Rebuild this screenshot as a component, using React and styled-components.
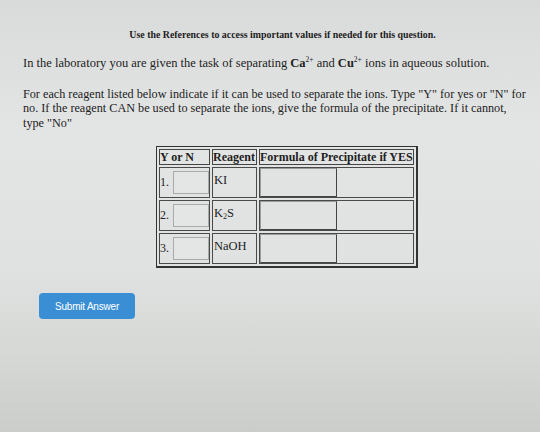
import React from "react";
import styled, { createGlobalStyle } from "styled-components";

const GlobalStyle = createGlobalStyle`
  html, body {
    margin: 0;
    padding: 0;
  }
  body {
    width: 540px;
    height: 432px;
    overflow: hidden;
    background: linear-gradient(180deg, #d9dbda 0%, #e3e5e4 30%, #e0e2e1 62%, #d5d7d5 84%, #cbcdcb 100%);
  }
`;

const Page = styled.div`
  box-sizing: border-box;
  width: 540px;
  height: 432px;
  padding: 29px 8px 0 23px;
  font-family: "Liberation Serif", "Times New Roman", serif;
  color: #222;
`;

const Notice = styled.p`
  margin: 0 0 15px;
  padding-left: 10px;
  text-align: center;
  font-size: 9.9px;
  font-weight: bold;
  line-height: 12px;
  color: #1c1c1c;
`;

const Para = styled.p`
  margin: 0 0 ${(p) => p.$gap || 0}px;
  max-width: ${(p) => p.$max || 520}px;
  font-size: ${(p) => p.$size || 12}px;
  line-height: 14.5px;
`;

const Ion = styled.b`
  font-weight: bold;
`;

const Sup = styled.sup`
  font-size: 7.5px;
  line-height: 0;
  vertical-align: 5px;
  font-weight: normal;
`;

const Sub = styled.sub`
  font-size: 8px;
  line-height: 0;
  vertical-align: -2px;
`;

const Table = styled.table`
  margin: 16px 0 0 133px;
  border-collapse: separate;
  border-spacing: 2px;
  border: 1px solid #333;
  border-right-width: 2px;
  border-bottom-width: 2px;
  font-size: 12px;
`;

const Th = styled.th`
  border: 1px solid #444;
  padding: 0;
  height: 14px;
  font-weight: bold;
  font-size: 12px;
  text-align: left;
  white-space: nowrap;
  line-height: 14px;
  width: ${(p) => p.$w}px;
`;

const Td = styled.td`
  border: 1px solid #4a4a4a;
  padding: 0;
  height: 29px;
  vertical-align: middle;
`;

const Cell = styled.div`
  display: flex;
  align-items: center;
  height: 100%;
  padding-bottom: ${(p) => (p.$lift ? 4 : 0)}px;
  box-sizing: border-box;
`;

const Num = styled.span`
  width: 13px;
  font-size: 12px;
`;

const SmallBox = styled.div`
  box-sizing: border-box;
  width: 36px;
  height: 23px;
  border: 1px solid #a9abaa;
  background: #e4e6e5;
`;

const Formula = styled.div`
  box-sizing: border-box;
  width: 77px;
  height: 29px;
  border: 1px solid #9a9c9b;
  border-right-color: #444;
  border-bottom-color: #444;
  background: #e1e3e2;
`;

const Reagent = styled.span`
  padding-left: 1px;
  font-size: 12.5px;
`;

const Submit = styled.button`
  margin: 25px 0 0 16px;
  width: 96px;
  height: 26px;
  border: none;
  border-radius: 4px;
  background: #3a8fd4;
  color: #fff;
  font-family: "Liberation Sans", Arial, sans-serif;
  font-size: 10px;
  letter-spacing: -0.2px;
  padding: 0;
`;

const rows = [
  { n: "1.", reagent: "KI" },
  { n: "2.", reagent: <>K<Sub>2</Sub>S</> },
  { n: "3.", reagent: "NaOH" },
];

export default function App() {
  return (
    <>
      <GlobalStyle />
      <Page>
        <Notice>Use the References to access important values if needed for this question.</Notice>
        <Para $gap={16} $size={12.5}>
          In the laboratory you are given the task of separating <Ion>Ca<Sup>2+</Sup></Ion> and{" "}
          <Ion>Cu<Sup>2+</Sup></Ion> ions in aqueous solution.
        </Para>
        <Para $size={12.2} $max={506}>
          For each reagent listed below indicate if it can be used to separate the ions. Type "Y" for yes or "N" for
          no. If the reagent CAN be used to separate the ions, give the formula of the precipitate. If it cannot,
          type "No"
        </Para>
        <Table>
          <thead>
            <tr>
              <Th $w={48}>Y or N</Th>
              <Th $w={43}>Reagent</Th>
              <Th $w={150}>Formula of Precipitate if YES</Th>
            </tr>
          </thead>
          <tbody>
            {rows.map((r) => (
              <tr key={r.n}>
                <Td>
                  <Cell>
                    <Num>{r.n}</Num>
                    <SmallBox />
                  </Cell>
                </Td>
                <Td>
                  <Cell $lift>
                    <Reagent>{r.reagent}</Reagent>
                  </Cell>
                </Td>
                <Td>
                  <Cell>
                    <Formula />
                  </Cell>
                </Td>
              </tr>
            ))}
          </tbody>
        </Table>
        <Submit>Submit Answer</Submit>
      </Page>
    </>
  );
}
